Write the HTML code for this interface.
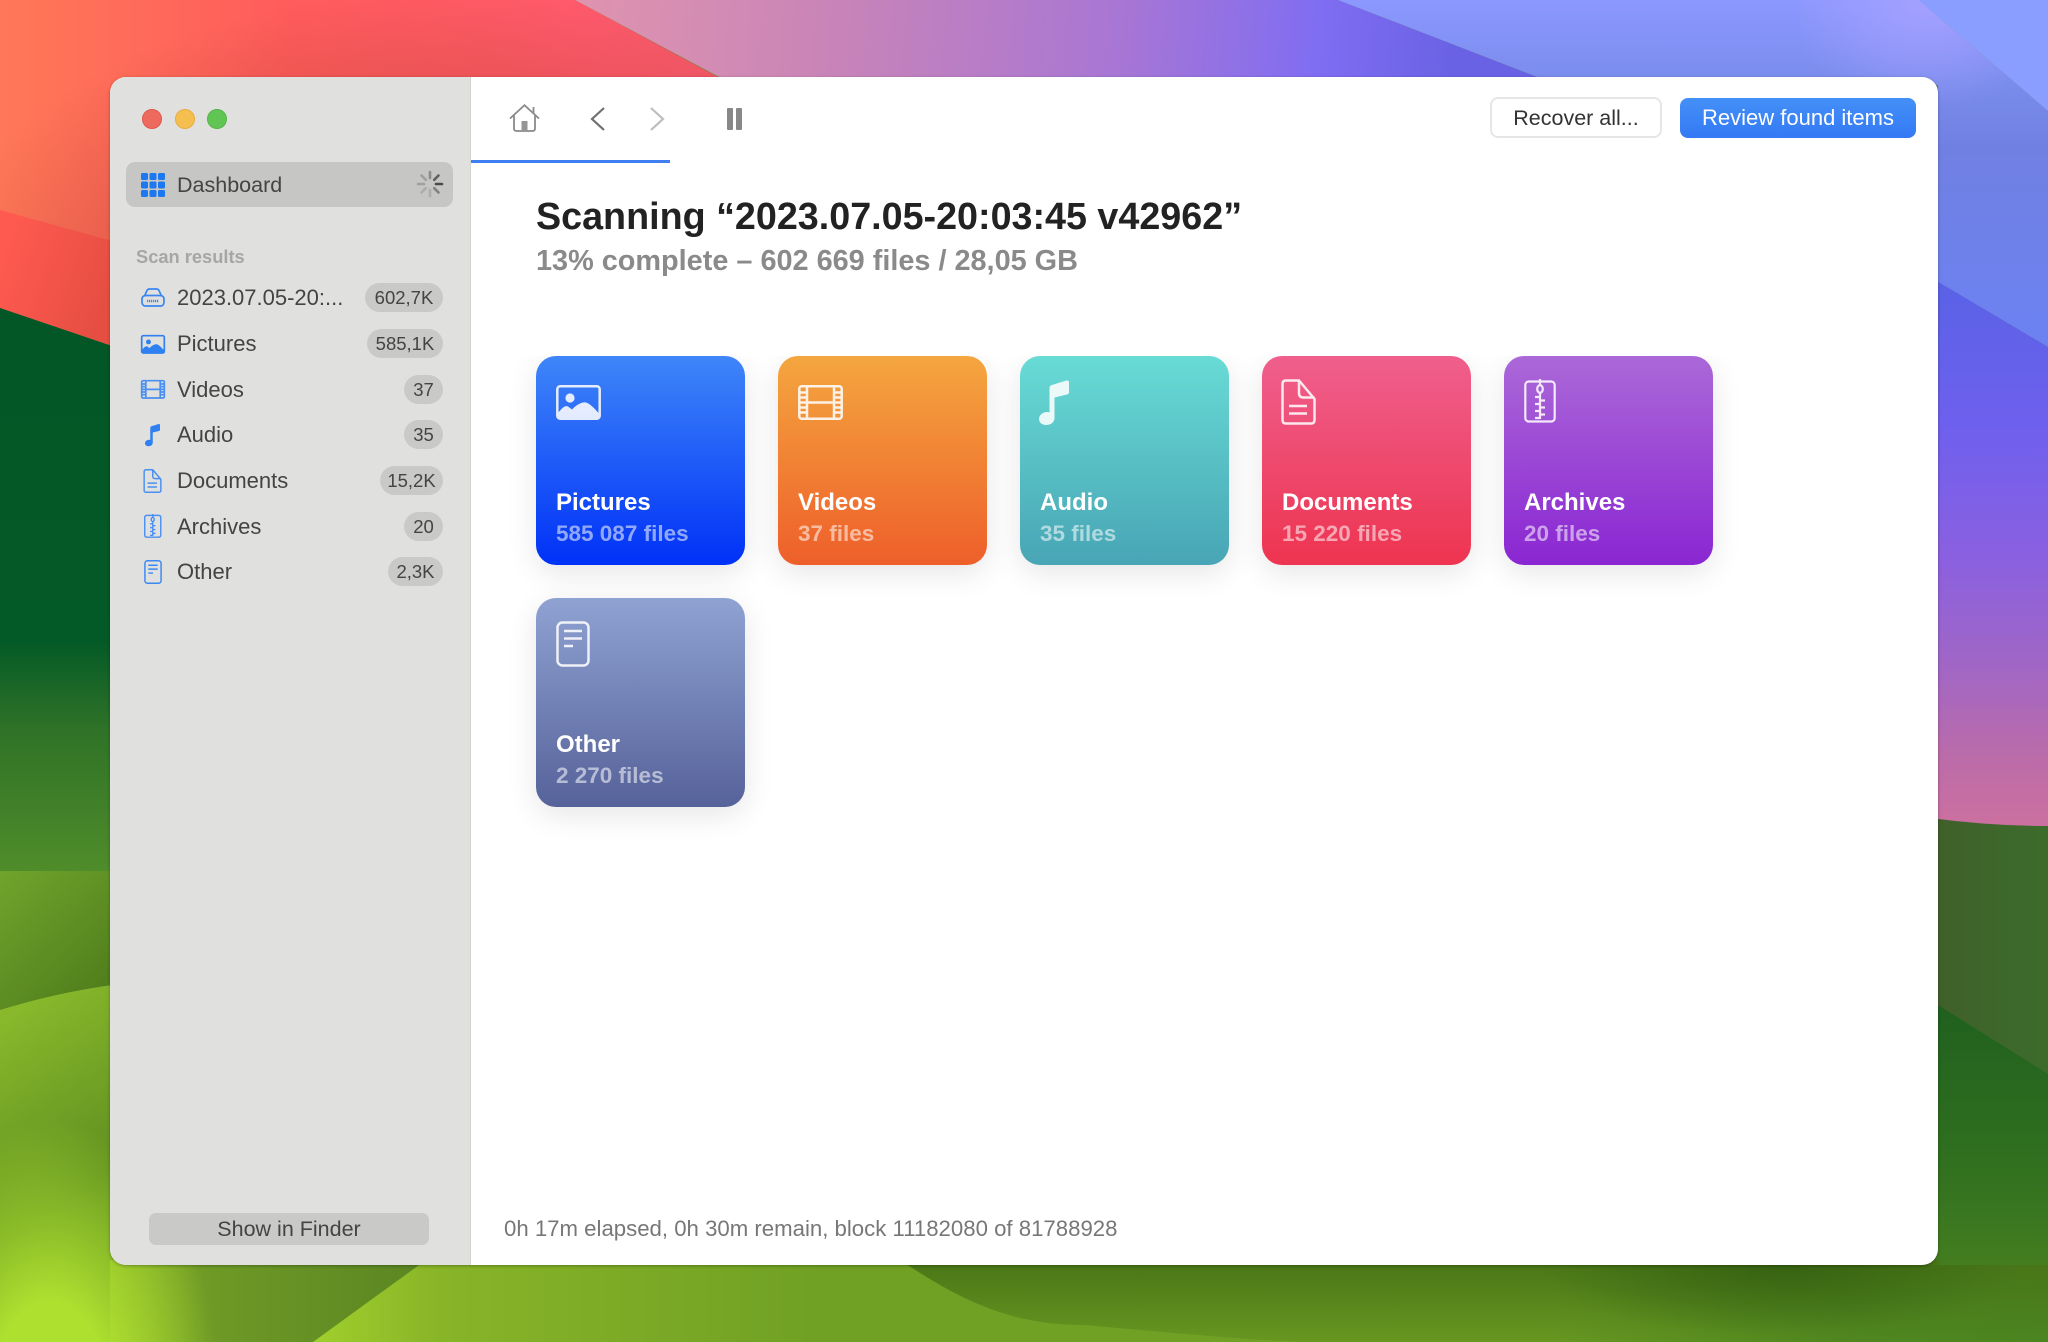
<!DOCTYPE html>
<html lang="en"><head><meta charset="utf-8"><title>Scanning</title>
<style>
*{box-sizing:border-box;margin:0;padding:0}
html,body{width:2048px;height:1342px;overflow:hidden;background:#5a8a22;font-family:"Liberation Sans",sans-serif}
#bg{position:absolute;left:0;top:0}
.a{position:absolute;white-space:nowrap}
#win{position:absolute;left:110px;top:77px;width:1828px;height:1188px;background:#fff;border-radius:16px;overflow:hidden;box-shadow:0 1px 3px rgba(0,0,0,.3)}
#side{position:absolute;left:110px;top:77px;width:361px;height:1188px;background:#e0e0de;border-right:1px solid #d4d4d2;border-radius:16px 0 0 16px}
.dot{position:absolute;width:20px;height:20px;border-radius:50%;top:109px}
.row{position:absolute;left:177px;font-size:22px;line-height:26px;height:26px;color:#444}
.bdg{position:absolute;height:29px;border-radius:15px;background:#c9c9c7;color:#444;font-size:18.5px;line-height:29px;text-align:center}
.ico{position:absolute;overflow:visible}
.card{position:absolute;width:209px;height:209px;border-radius:20px;box-shadow:0 8px 30px rgba(0,0,0,.1)}
.t{position:absolute;left:20px;top:133px;font-weight:bold;font-size:24px;line-height:28px;color:#fff}
.s{position:absolute;left:20px;top:165px;font-weight:bold;font-size:22.5px;line-height:26px;color:rgba(255,255,255,.55)}
.ci{position:absolute;overflow:visible;color:#fff;opacity:.87}
</style></head>
<body>
<svg id="bg" width="2048" height="1342" viewBox="0 0 2048 1342">
<defs>
<linearGradient id="cor" gradientUnits="userSpaceOnUse" x1="0" y1="0" x2="720" y2="0"><stop offset="0" stop-color="#ff7858"/><stop offset=".4" stop-color="#ff5c5c"/><stop offset=".8" stop-color="#ff5a6c"/><stop offset="1" stop-color="#f5586a"/></linearGradient>
<radialGradient id="dk" gradientUnits="userSpaceOnUse" cx="0" cy="0" r="1" gradientTransform="translate(450 300) scale(520 310)"><stop offset="0" stop-color="#b84030" stop-opacity=".6"/><stop offset=".7" stop-color="#b84030" stop-opacity=".28"/><stop offset="1" stop-color="#b84030" stop-opacity="0"/></radialGradient>
<linearGradient id="red" gradientUnits="userSpaceOnUse" x1="0" y1="250" x2="112" y2="290"><stop offset="0" stop-color="#ff5a50"/><stop offset="1" stop-color="#e64e42"/></linearGradient>
<linearGradient id="gr1" gradientUnits="userSpaceOnUse" x1="0" y1="300" x2="0" y2="871"><stop offset="0" stop-color="#035626"/><stop offset=".6" stop-color="#045a26"/><stop offset=".75" stop-color="#2f7228"/><stop offset="1" stop-color="#4f8c2a"/></linearGradient>
<linearGradient id="gr2" gradientUnits="userSpaceOnUse" x1="0" y1="871" x2="112" y2="990"><stop offset="0" stop-color="#70a42c"/><stop offset="1" stop-color="#4f7d1c"/></linearGradient>
<linearGradient id="gr3" gradientUnits="userSpaceOnUse" x1="0" y1="1000" x2="112" y2="1170"><stop offset="0" stop-color="#8cbc2c"/><stop offset="1" stop-color="#5f8f20"/></linearGradient>
<radialGradient id="glow" gradientUnits="userSpaceOnUse" cx="0" cy="0" r="1" gradientTransform="translate(50 1400) scale(170 280)"><stop offset="0" stop-color="#aee030"/><stop offset=".35" stop-color="#aee030"/><stop offset="1" stop-color="#aee030" stop-opacity="0"/></radialGradient>
<linearGradient id="mid" gradientUnits="userSpaceOnUse" x1="575" y1="0" x2="1450" y2="70"><stop offset="0" stop-color="#df94ae"/><stop offset=".3" stop-color="#c884b8"/><stop offset=".62" stop-color="#a876d4"/><stop offset=".85" stop-color="#7f6df2"/><stop offset="1" stop-color="#6a62e4"/></linearGradient>
<linearGradient id="ltb" gradientUnits="userSpaceOnUse" x1="0" y1="0" x2="0" y2="347"><stop offset="0" stop-color="#8c98ff"/><stop offset=".23" stop-color="#7a8cec"/><stop offset=".43" stop-color="#7080e2"/><stop offset="1" stop-color="#6c82f2"/></linearGradient>
<radialGradient id="lav" gradientUnits="userSpaceOnUse" cx="0" cy="0" r="1" gradientTransform="translate(1925 0) scale(140 110)"><stop offset="0" stop-color="#a4a0ff"/><stop offset="1" stop-color="#a4a0ff" stop-opacity="0"/></radialGradient>
<linearGradient id="pur" gradientUnits="userSpaceOnUse" x1="0" y1="285" x2="0" y2="826"><stop offset="0" stop-color="#5a62e6"/><stop offset=".26" stop-color="#6e60ee"/><stop offset=".5" stop-color="#8a60e0"/><stop offset=".7" stop-color="#a066c6"/><stop offset=".88" stop-color="#bc6ca8"/><stop offset="1" stop-color="#cc70a0"/></linearGradient>
<linearGradient id="olv" gradientUnits="userSpaceOnUse" x1="1938" y1="0" x2="2048" y2="0"><stop offset="0" stop-color="#40602a"/><stop offset="1" stop-color="#3c6c2c"/></linearGradient>
<linearGradient id="rg" gradientUnits="userSpaceOnUse" x1="0" y1="1005" x2="0" y2="1270"><stop offset="0" stop-color="#20601f"/><stop offset=".6" stop-color="#30701f"/><stop offset="1" stop-color="#457e20"/></linearGradient>
<linearGradient id="bot" gradientUnits="userSpaceOnUse" x1="300" y1="0" x2="2048" y2="0"><stop offset="0" stop-color="#a2d22c"/><stop offset=".08" stop-color="#88b428"/><stop offset=".3" stop-color="#70a024"/><stop offset=".72" stop-color="#70a024"/><stop offset=".88" stop-color="#528c22"/><stop offset="1" stop-color="#4c8a24"/></linearGradient>
<linearGradient id="bl" gradientUnits="userSpaceOnUse" x1="110" y1="0" x2="430" y2="0"><stop offset="0" stop-color="#88b428"/><stop offset=".3" stop-color="#6f9a26"/><stop offset="1" stop-color="#5a8522"/></linearGradient>
<linearGradient id="dkc" gradientUnits="userSpaceOnUse" x1="0" y1="1262" x2="0" y2="1342"><stop offset="0" stop-color="#487416" stop-opacity=".95"/><stop offset="1" stop-color="#487416" stop-opacity=".22"/></linearGradient>
<radialGradient id="dkg" gradientUnits="userSpaceOnUse" cx="0" cy="0" r="1" gradientTransform="translate(1780 1265) scale(240 70)"><stop offset="0" stop-color="#2f5a10" stop-opacity=".7"/><stop offset="1" stop-color="#2f5a10" stop-opacity="0"/></radialGradient>
</defs>
<rect width="2048" height="1342" fill="#5a8a22"/>
<!-- top -->
<path d="M0 0H575L742 90V300H0Z" fill="url(#cor)"/>
<path d="M0 0H575L742 90V300H0Z" fill="url(#dk)"/>
<path d="M575 0H1338L1558 85H734Z" fill="url(#mid)"/>
<path d="M1338 0H1919L2048 111V347L1938 282V85H1558Z" fill="url(#ltb)"/>
<path d="M1800 0H1919L2048 111V140H1800Z" fill="url(#lav)"/>
<path d="M1919 0H2048V111Z" fill="#8a9eff"/>
<!-- left -->
<path d="M0 210L112 241V346L0 308Z" fill="url(#red)"/>
<path d="M0 308L112 346V871H0Z" fill="url(#gr1)"/>
<rect y="871" width="112" height="140" fill="url(#gr2)"/>
<path d="M0 1010Q55 993 112 985V1342H0Z" fill="url(#gr3)"/>
<!-- right -->
<path d="M1930 277L2048 347V830H1930Z" fill="url(#pur)"/>
<path d="M1930 818Q1990 826 2048 826V1075L1930 1002Z" fill="url(#olv)"/>
<path d="M1930 1000L2048 1074V1270H1930Z" fill="url(#rg)"/>
<!-- bottom -->
<rect x="110" y="1265" width="1938" height="77" fill="url(#bot)"/>
<path d="M110 1260H426L313 1342H110Z" fill="url(#bl)"/>
<path d="M900 1260C960 1300 1010 1325 1084 1325C1175 1333 1250 1340 1305 1342H2048V1265H1940V1260Z" fill="url(#dkc)"/>
<rect x="1530" y="1265" width="500" height="77" fill="url(#dkg)"/>
<rect x="0" y="1100" width="240" height="242" fill="url(#glow)"/>

<symbol id="pic" viewBox="0 0 45 35" overflow="visible"><rect x="1.3" y="1.3" width="42.4" height="32.4" rx="3" fill="none" stroke="currentColor"/><circle cx="14" cy="13" r="4.6" fill="currentColor"/><path d="M2 31V28C6 23 9 20 12 21.5L16 24.5C20 20 26 16.5 30 17.5C34 18.5 39 24 43 28.5V31Q43 34 40 34H5Q2 34 2 31Z" fill="currentColor"/></symbol>
<symbol id="film" viewBox="0 0 45 35" overflow="visible"><g fill="none" stroke="currentColor"><rect x="1.3" y="1.3" width="42.4" height="32.4" rx="2.5"/><path d="M9 1.3V33.7M36 1.3V33.7M9 17.5H36M1.3 7.5H9M1.3 12.5H9M1.3 17.5H9M1.3 22.5H9M1.3 27.5H9M36 7.5H43.7M36 12.5H43.7M36 17.5H43.7M36 22.5H43.7M36 27.5H43.7"/></g></symbol>
<symbol id="note" viewBox="0 0 30 45" overflow="visible"><path d="M10.5 8Q10.5 5.5 13 5L27 .6Q30 0 30 2.5V12.5Q30 14 28 14.5L15.5 17.5V38C15.5 42 12 45 7 45C3 45 0 42.5 0 39C0 35 4 32 8 32C9 32 10 32.3 10.5 32.6Z" fill="currentColor"/></symbol>
<symbol id="doc" viewBox="0 0 35 46" overflow="visible"><g fill="none" stroke="currentColor"><path d="M5 1.5H18L33.5 20V41Q33.5 44.5 30 44.5H5Q1.5 44.5 1.5 41V5Q1.5 1.5 5 1.5Z"/><path d="M18 1.5V14Q18 18.5 22.5 18.5H33.5M8 27H26M8 34.5H26"/></g></symbol>
<symbol id="zip" viewBox="0 0 32 44" overflow="visible"><g fill="none" stroke="currentColor"><rect x="1.3" y="2.5" width="29.4" height="40" rx="3.5"/><path d="M16 0V6M16 14V40M11 18H16M16 21.5H21M11 25H16M16 28.5H21M11 32H16M16 35.5H21M11 39H16"/><ellipse cx="16" cy="10" rx="2.8" ry="3.8"/></g></symbol>
<symbol id="oth" viewBox="0 0 34 46" overflow="visible"><g fill="none" stroke="currentColor"><rect x="1.5" y="1.5" width="31" height="43" rx="5"/><path d="M8 10H26M8 17.5H26M8 25H17"/></g></symbol>
</svg>

<div id="win"></div>
<div id="side"></div>
<div class="dot" style="left:142px;background:#ee6a5f;border:1px solid #e0574c"></div>
<div class="dot" style="left:175px;background:#f5bf4f;border:1px solid #e6ad3f"></div>
<div class="dot" style="left:207px;background:#61c554;border:1px solid #54b548"></div>

<div class="a" style="left:126px;top:162px;width:327px;height:45px;background:#c6c6c4;border-radius:9px"></div>
<svg class="ico" style="left:141px;top:173px" width="24" height="24" viewBox="0 0 24 24" fill="#1c78f0">
<rect width="7" height="7" rx="1.5"/><rect x="8.5" width="7" height="7" rx="1.5"/><rect x="17" width="7" height="7" rx="1.5"/>
<rect y="8.5" width="7" height="7" rx="1.5"/><rect x="8.5" y="8.5" width="7" height="7" rx="1.5"/><rect x="17" y="8.5" width="7" height="7" rx="1.5"/>
<rect y="17" width="7" height="7" rx="1.5"/><rect x="8.5" y="17" width="7" height="7" rx="1.5"/><rect x="17" y="17" width="7" height="7" rx="1.5"/></svg>
<div class="a" style="left:177px;top:171px;font-size:21.5px;line-height:28px;color:#444">Dashboard</div>
<svg class="ico" style="left:416px;top:170px" width="28" height="28" viewBox="-14 -14 28 28" stroke-width="2.6" stroke-linecap="round" fill="none">
<path d="M6 0H12" stroke="#4a4a4a"/><path d="M4.2 4.2L8.5 8.5" stroke="#808080"/><path d="M0 6V12" stroke="#adadad"/><path d="M-4.2 4.2L-8.5 8.5" stroke="#adadad"/><path d="M-6 0H-12" stroke="#a0a0a0"/><path d="M-4.2 -4.2L-8.5 -8.5" stroke="#a0a0a0"/><path d="M0 -6V-12" stroke="#8c8c8c"/><path d="M4.2 -4.2L8.5 -8.5" stroke="#606060"/></svg>

<div class="a" style="left:136px;top:246px;font-size:18.3px;font-weight:bold;line-height:22px;color:#a6a6a6">Scan results</div>

<svg class="ico" style="left:141px;top:288px" width="24" height="19" viewBox="0 0 24 19" fill="none" stroke="#3a86f2" stroke-width="1.7"><path d="M3.5 8L6 2.5Q6.7 1 8.5 1H15.5Q17.3 1 18 2.5L20.5 8"/><rect x="1" y="7.5" width="22" height="10.5" rx="3.5"/><path d="M6 13H18" stroke-width="2.6" stroke-dasharray="1.2 .8"/></svg>
<div class="row" style="top:285px">2023.07.05-20:...</div>
<div class="bdg" style="left:365px;top:283px;width:78px">602,7K</div>

<svg class="ico" style="left:141px;top:335px;color:#2f80f0;stroke-width:3.2" width="24" height="18.7"><use href="#pic"/></svg>
<div class="row" style="top:331px">Pictures</div>
<div class="bdg" style="left:367px;top:329px;width:76px">585,1K</div>

<svg class="ico" style="left:141px;top:380px;color:#4a90f2;stroke-width:3.2" width="24" height="18.7"><use href="#film"/></svg>
<div class="row" style="top:377px">Videos</div>
<div class="bdg" style="left:404px;top:375px;width:39px">37</div>

<svg class="ico" style="left:145px;top:423px;color:#2f80f0" width="15" height="24"><use href="#note"/></svg>
<div class="row" style="top:422px">Audio</div>
<div class="bdg" style="left:404px;top:420px;width:39px">35</div>

<svg class="ico" style="left:143px;top:469px;color:#4a90f2;stroke-width:2.8" width="19" height="24"><use href="#doc"/></svg>
<div class="row" style="top:468px">Documents</div>
<div class="bdg" style="left:380px;top:466px;width:63px">15,2K</div>

<svg class="ico" style="left:144px;top:514px;color:#4a90f2;stroke-width:2.6" width="17.5" height="24"><use href="#zip"/></svg>
<div class="row" style="top:514px">Archives</div>
<div class="bdg" style="left:404px;top:512px;width:39px">20</div>

<svg class="ico" style="left:144px;top:560px;color:#3a88f2;stroke-width:2.8" width="18" height="24"><use href="#oth"/></svg>
<div class="row" style="top:559px">Other</div>
<div class="bdg" style="left:388px;top:557px;width:55px">2,3K</div>

<div class="a" style="left:149px;top:1213px;width:280px;height:32px;border-radius:7px;background:#c9c9c7;color:#444;font-size:21.5px;line-height:32px;text-align:center">Show in Finder</div>

<!-- toolbar -->
<svg class="ico" style="left:509px;top:104px" width="31" height="28" viewBox="0 0 31 28" fill="none" stroke="#8a8a8a" stroke-width="1.8"><path d="M1 14.5L15.5 1.2L30 14.5M24.5 3V9M5 11.5V24.5Q5 27 7.5 27H23.5Q26 27 26 24.5V11.5"/><rect x="12.5" y="17" width="6" height="10" fill="#959595" stroke="none"/></svg>
<svg class="ico" style="left:590px;top:107px" width="15" height="24" viewBox="0 0 15 24" fill="none" stroke="#707070" stroke-width="2.2"><path d="M14 1L2 12L14 23"/></svg>
<svg class="ico" style="left:650px;top:107px" width="15" height="24" viewBox="0 0 15 24" fill="none" stroke="#bdbdbd" stroke-width="2.2"><path d="M1 1L13 12L1 23"/></svg>
<div class="a" style="left:727px;top:108px;width:6px;height:22px;background:#888;border-radius:1px"></div>
<div class="a" style="left:736px;top:108px;width:6px;height:22px;background:#888;border-radius:1px"></div>
<div class="a" style="left:471px;top:160px;width:199px;height:3px;background:#3f7ef0"></div>

<div class="a" style="left:1490px;top:97px;width:172px;height:41px;background:#fff;border:2px solid #e6e6e6;border-radius:8px;color:#333;font-size:21.5px;line-height:39px;text-align:center">Recover all...</div>
<div class="a" style="left:1680px;top:98px;width:236px;height:40px;background:linear-gradient(#4490f8,#3479f4);border-radius:8px;color:#fff;font-size:22px;line-height:40px;text-align:center">Review found items</div>

<div class="a" style="left:536px;top:194px;font-size:37.7px;font-weight:bold;line-height:44px;color:#222">Scanning “2023.07.05-20:03:45 v42962”</div>
<div class="a" style="left:536px;top:244px;font-size:28.85px;font-weight:bold;line-height:34px;color:#8a8a8a">13% complete – 602 669 files / 28,05 GB</div>

<!-- row 1 (shadow clipped on top) -->
<div class="a" style="left:480px;top:356px;width:1300px;height:242px;overflow:hidden">
<div class="card" style="left:56px;top:0;background:linear-gradient(#3f86f8,#0031f7)"><svg class="ci" style="left:20px;top:29px;stroke-width:2.5" width="45" height="35"><use href="#pic"/></svg><div class="t">Pictures</div><div class="s">585 087 files</div></div>
<div class="card" style="left:298px;top:0;background:linear-gradient(#f4a63f,#ee5f2a)"><svg class="ci" style="left:20px;top:29px;stroke-width:2.5" width="45" height="35"><use href="#film"/></svg><div class="t">Videos</div><div class="s">37 files</div></div>
<div class="card" style="left:540px;top:0;background:linear-gradient(#68dbd5,#48a5b5)"><svg class="ci" style="left:19px;top:24px" width="30" height="45"><use href="#note"/></svg><div class="t">Audio</div><div class="s">35 files</div></div>
<div class="card" style="left:782px;top:0;background:linear-gradient(#ef5f8d,#ee3450)"><svg class="ci" style="left:19px;top:23px;stroke-width:2.5" width="35" height="46"><use href="#doc"/></svg><div class="t">Documents</div><div class="s">15 220 files</div></div>
<div class="card" style="left:1024px;top:0;background:linear-gradient(#ab68d8,#8a26d2)"><svg class="ci" style="left:20px;top:23px;stroke-width:2.2" width="32" height="44"><use href="#zip"/></svg><div class="t">Archives</div><div class="s">20 files</div></div>
</div>
<div class="card" style="left:536px;top:598px;background:linear-gradient(#8fa2d2,#56629a)"><svg class="ci" style="left:20px;top:23px;stroke-width:2.5" width="34" height="46"><use href="#oth"/></svg><div class="t">Other</div><div class="s">2 270 files</div></div>

<div class="a" style="left:504px;top:1216px;font-size:22.2px;line-height:26px;color:#777">0h 17m elapsed, 0h 30m remain, block 11182080 of 81788928</div>
</body></html>
